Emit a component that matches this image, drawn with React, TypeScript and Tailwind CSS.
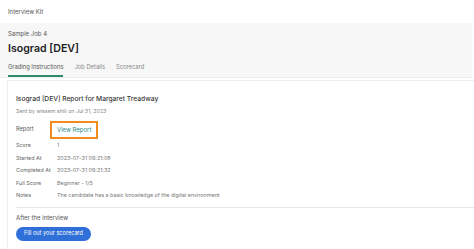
import React from "react";

const rows: [string, string][] = [
  ["Score", "1"],
  ["Started At", "2023-07-31 09:21:08"],
  ["Completed At", "2023-07-31 09:21:32"],
  ["Full Score", "Beginner - 1/5"],
  ["Notes", "The candidate has a basic knowledge of the digital environment"],
];

export default function App() {
  return (
    <div
      className="w-[474px] h-[249px] bg-white overflow-hidden text-[#444]"
      style={{ fontFamily: "Inter, 'Noto Sans', sans-serif" }}
    >
      <div className="h-[23px] pl-[8px] flex items-center text-[6px] text-[#555] pb-[1px]">
        Interview Kit
      </div>
      <div className="w-[472px] h-[55px] bg-[#f7f7f7] border-b border-[#ececec] pl-[8px] flex flex-col">
        <div className="h-[12px] mt-[5px] flex items-center text-[6px] text-[#555]">Sample Job 4</div>
        <div className="h-[16px] mt-[1px] flex items-center text-[10.6px] font-semibold text-[#222]">
          Isograd [DEV]
        </div>
        <div className="flex gap-[11px] mt-[2px] text-[5.8px] text-[#888] h-[19px]">
          <div className="relative flex items-start pt-[4px] text-[#555]">
            Grading Instructions
            <div className="absolute left-0 right-0 bottom-[0px] h-[2px] bg-[#2e8b6e]" />
          </div>
          <div className="pt-[4px]">Job Details</div>
          <div className="pt-[4px]">Scorecard</div>
        </div>
      </div>
      <div className="ml-[7px] mt-[2px] border-l border-t border-[#eeeeee] h-[200px] pl-[8px]">
        <div className="h-[15px] mt-[11px] flex items-center text-[6.7px] font-medium text-[#3a3a3a]">
          Isograd [DEV] Report for Margaret Treadway
        </div>
        <div className="h-[10px] flex items-center text-[5.3px] text-[#888]">
          Sent by wissem shili on Jul 31, 2023
        </div>
        <div className="flex items-center h-[19px] mt-[3px] text-[5.6px]">
          <div className="w-[34px] text-[#555]">Report</div>
          <div className="h-[18px] border-2 border-[#f28c1e] px-[5px] flex items-center text-[#2a8a8a] text-[6px]">
            View Report
          </div>
        </div>
        <div className="flex flex-col">
          {rows.map(([k, v]) => (
            <div key={k} className="flex items-center h-[12.5px] text-[5.4px]">
              <div className="w-[41px] text-[#666]">{k}</div>
              <div className="text-[#777]">{v}</div>
            </div>
          ))}
        </div>
        <div className="mt-[5px] border-t border-[#e6e6e6] h-[1px]" />
        <div className="h-[16px] mt-[2px] flex items-center text-[6px] text-[#555]">
          After the interview
        </div>
        <div className="mt-[1px] w-[75px] h-[14px] rounded-full bg-[#2f6fd8] text-white text-[5.6px] flex items-center justify-center">
          Fill out your scorecard
        </div>
      </div>
    </div>
  );
}
